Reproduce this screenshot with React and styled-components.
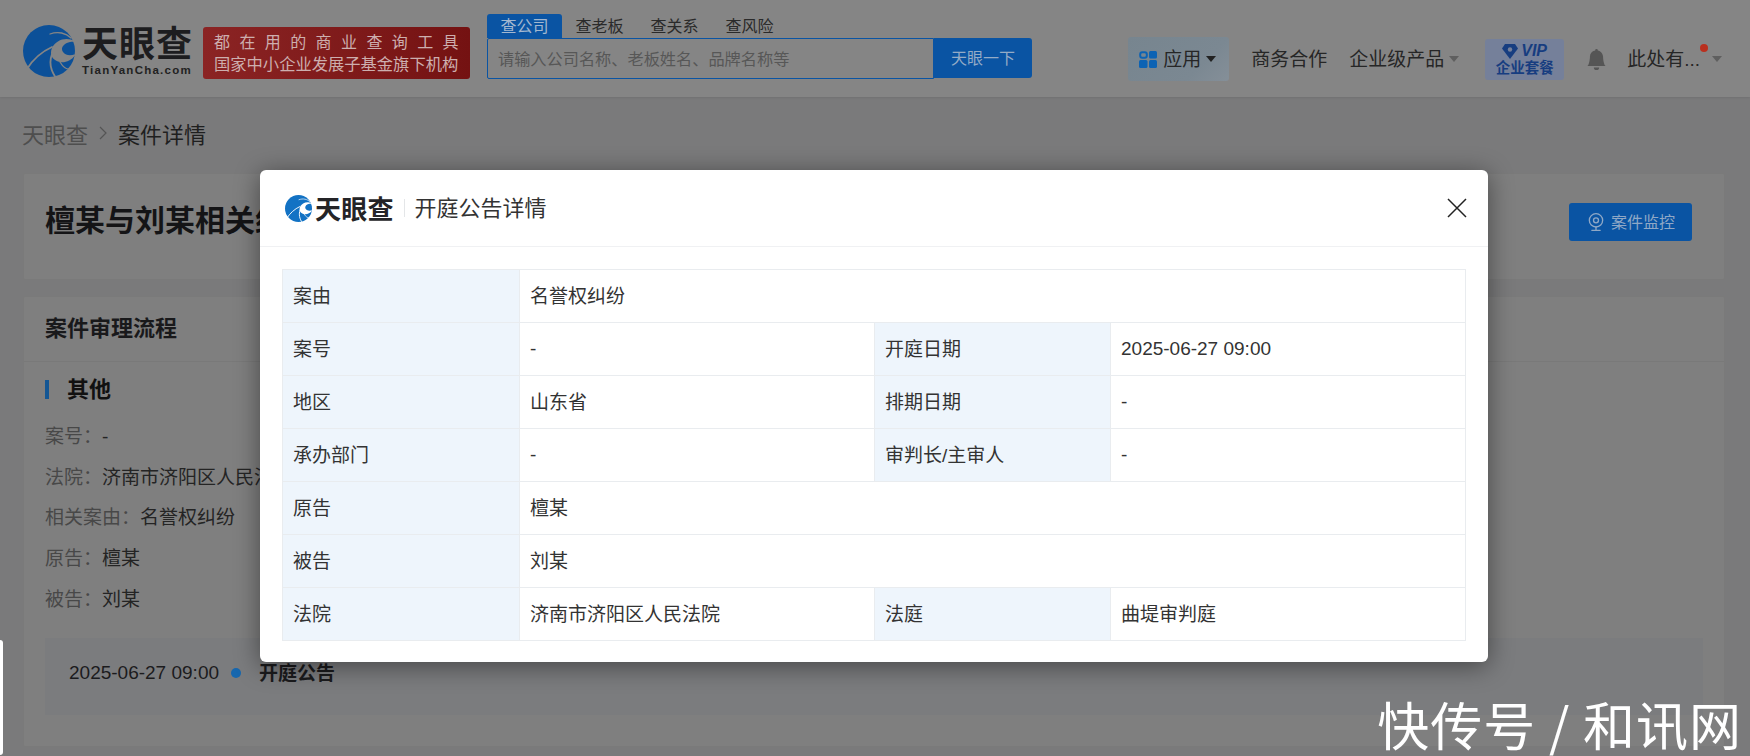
import styled, { createGlobalStyle } from 'styled-components';
import { BsBellFill } from 'react-icons/bs';
import { Webcam } from 'lucide-react';

const GlobalStyle = createGlobalStyle`
  html, body {
    margin: 0;
    padding: 0;
    height: 756px;
    overflow: hidden;
    background: #7a7a7b;
    font-family: "Liberation Sans", "Noto Sans CJK SC", sans-serif;
    color: #1c1c1e;
  }
  * { box-sizing: border-box; }
`;

const Page = styled.div`
  position: relative;
  width: 1750px;
  height: 756px;
  overflow: hidden;
`;

const Header = styled.header`
  display: flex;
  align-items: flex-start;
  height: 97px;
  padding: 0 28px 0 23px;
  background: #858585;
  box-shadow: 0 1px 2px rgba(0, 0, 0, 0.08);
`;

const Brand = styled.div`
  display: flex;
  align-items: center;
  gap: 7px;
  margin-top: 25px;
`;

const BrandText = styled.div`
  display: flex;
  flex-direction: column;
  width: 110px;
`;

const BrandName = styled.span`
  font-size: 36px;
  line-height: 38px;
  font-weight: 700;
  color: #1d1d1f;
  letter-spacing: 1px;
  white-space: nowrap;
`;

const BrandDomain = styled.span`
  font-size: 11.5px;
  line-height: 12px;
  font-weight: 700;
  color: #222;
  letter-spacing: 1.25px;
  white-space: nowrap;
`;

const Banner = styled.div`
  display: flex;
  flex-direction: column;
  justify-content: center;
  gap: 5px;
  width: 267px;
  height: 52px;
  margin: 27px 0 0 11px;
  padding-left: 11px;
  border-radius: 3px;
  background: linear-gradient(90deg, #8b2424, #741212);
  color: #cdaeae;
  font-size: 16.3px;
  line-height: 17px;
  white-space: nowrap;
`;

const BannerTop = styled.span`
  font-size: 16px;
  letter-spacing: 9.4px;
`;

const Search = styled.div`
  width: 545px;
  margin: 14px 0 0 17px;
`;

const Tabs = styled.div`
  display: flex;
  height: 24px;
`;

const Tab = styled.div`
  width: 75px;
  text-align: center;
  font-size: 16px;
  line-height: 25px;
  border-radius: 3px 3px 0 0;
  background: ${props => (props.$active ? '#0a54a3' : 'transparent')};
  color: ${props => (props.$active ? '#a3b8d0' : '#2a2a2a')};
`;

const SearchRow = styled.div`
  display: flex;
  height: 41px;
`;

const SearchInput = styled.div`
  width: 447px;
  padding-left: 10px;
  border: 1px solid #0a54a3;
  border-radius: 2px 0 0 2px;
  font-size: 16.2px;
  line-height: 41px;
  color: #575757;
`;

const SearchButton = styled.div`
  width: 98px;
  height: 40px;
  border-radius: 0 3px 3px 0;
  background: #0a54a3;
  color: #94abc6;
  font-size: 16px;
  line-height: 41px;
  text-align: center;
`;

const Nav = styled.nav`
  display: flex;
  align-items: center;
  height: 44px;
  margin: 37px 0 0 auto;
  font-size: 19px;
  color: #262626;
  white-space: nowrap;
`;

const AppsButton = styled.div`
  display: flex;
  align-items: center;
  width: 101px;
  height: 44px;
  padding-left: 11px;
  border-radius: 3px;
  background: linear-gradient(135deg, #77858f, #7b8892 70%, #858f98);
`;

const AppsLabel = styled.span`
  padding-bottom: 4px;
`;

const NavItem = styled.span`
  margin-left: ${props => props.$gap || 22}px;
  padding-bottom: 4px;
`;

const Caret = styled.i`
  display: inline-block;
  margin-left: ${props => props.$gap || 5}px;
  border-style: solid;
  border-width: 6px 5px 0;
  border-color: ${props => props.$color || '#5f5f5f'} transparent transparent;
`;

const VipBadge = styled.div`
  display: flex;
  flex-direction: column;
  align-items: center;
  width: 79px;
  height: 41px;
  margin-left: 26px;
  padding-top: 4px;
  border-radius: 3px;
  background: #75809a;
  color: #173d80;
  font-weight: 700;
`;

const VipLine = styled.div`
  display: flex;
  align-items: center;
  gap: 3px;
  height: 17px;
  font-size: 16px;
  font-style: italic;
`;

const VipText = styled.span`
  font-size: 14.5px;
  line-height: 17px;
`;

const Bell = styled.span`
  display: flex;
  margin-left: 22px;
  color: #555;
  font-size: 21px;
`;

const UserName = styled.span`
  position: relative;
  margin-left: 20px;
  padding-bottom: 4px;
`;

const RedDot = styled.i`
  position: absolute;
  top: 0;
  right: -8px;
  width: 8px;
  height: 8px;
  border-radius: 50%;
  background: #b9301f;
`;

const Main = styled.main`
  width: 1702px;
  margin-left: 23px;
`;

const Breadcrumb = styled.div`
  display: flex;
  align-items: center;
  height: 76px;
  padding-bottom: 5px;
  font-size: 22px;
  color: #1f1f1f;
`;

const CrumbLink = styled.span`
  color: #4e4e4e;
  margin-left: -1px;
`;

const CrumbSep = styled.svg`
  width: 10px;
  height: 16px;
  margin: 0 10px;
  fill: none;
  stroke: #555;
  stroke-width: 1.2;
`;

const Card = styled.section`
  background: #7f7f7f;
  border: 1px solid #7a7a7a;
  border-radius: 2px;
`;

const TitleCard = styled(Card)`
  display: flex;
  align-items: center;
  justify-content: space-between;
  height: 107px;
  padding: 0 32px 9px 21px;
`;

const CaseTitle = styled.h1`
  margin: 0 0 9px;
  font-size: 30px;
  font-weight: 700;
  color: #141416;
`;

const MonitorButton = styled.div`
  display: flex;
  align-items: center;
  gap: 5px;
  width: 123px;
  height: 38px;
  padding-left: 17px;
  border-radius: 3px;
  background: #0a54a3;
  color: #8fa8c6;
  font-size: 16px;
`;

const MonitorLabel = styled.span`
  padding-bottom: 2px;
`;

const ProcessCard = styled(Card)`
  height: 451px;
  margin-top: 16px;
`;

const CardHead = styled.div`
  height: 65px;
  padding-left: 21px;
  border-bottom: 1px solid #797979;
  font-size: 22px;
  font-weight: 700;
  line-height: 64px;
  color: #19191b;
`;

const CardBody = styled.div`
  padding: 11px 21px 0;
`;

const SectionName = styled.h2`
  display: flex;
  align-items: center;
  gap: 18px;
  height: 28px;
  margin: 0 0 16px;
  font-size: 22px;
  font-weight: 700;
  color: #111;
`;

const SectionMark = styled.i`
  width: 4px;
  height: 19px;
  margin-top: 4px;
  background: #135694;
`;

const InfoRow = styled.div`
  height: 40.7px;
  font-size: 19px;
  line-height: 40.7px;
  color: #242424;
`;

const InfoLabel = styled.span`
  color: #484848;
`;

const Timeline = styled.div`
  display: flex;
  align-items: center;
  height: 77px;
  margin-top: 18px;
  padding: 0 0 7px 24px;
  background: #7b7c7e;
  font-size: 19px;
  color: #1b1b1d;
`;

const TimelineDot = styled.i`
  width: 10px;
  height: 10px;
  margin: 0 19px 0 12px;
  border-radius: 50%;
  background: #1767ae;
`;

const TimelineName = styled.strong`
  padding-bottom: 4px;
  margin-left: -1px;
  font-weight: 700;
`;

const Modal = styled.div`
  position: absolute;
  top: 170px;
  left: 260px;
  width: 1228px;
  height: 492px;
  border-radius: 6px;
  background: #fff;
  box-shadow: 0 4px 26px rgba(0, 0, 0, 0.45);
`;

const ModalHead = styled.div`
  display: flex;
  align-items: center;
  height: 77px;
  padding: 0 21px 0 25px;
  border-bottom: 1px solid #f0f1f3;
`;

const ModalBrand = styled.span`
  margin-left: 3px;
  padding-bottom: 2px;
  font-size: 26px;
  font-weight: 700;
  letter-spacing: 0.2px;
  color: #242427;
`;

const ModalDivider = styled.i`
  width: 1px;
  height: 18px;
  margin: 0 10px;
  background: #e4e6e8;
`;

const ModalTitle = styled.span`
  padding-bottom: 4px;
  font-size: 22px;
  color: #333;
`;

const CloseIcon = styled.svg`
  width: 20px;
  height: 20px;
  margin-left: auto;
  fill: none;
  stroke: #222;
  stroke-width: 1.5;
`;

const ModalBody = styled.div`
  padding: 22px;
`;

const DetailTable = styled.table`
  width: 1183px;
  height: 371px;
  table-layout: fixed;
  border-collapse: collapse;
  font-size: 19px;
  color: #333;
`;

// CJK sits low in its line box, $latin cells (dates, dashes) stay centred
const Cell = styled.td`
  height: 53px;
  padding: 0 0 ${props => (props.$latin ? 0 : 4)}px 10px;
  border: 1px solid #e9ecef;
  background: ${props => (props.$label ? '#eef5fc' : '#fff')};
`;

const Watermark = styled.div`
  position: absolute;
  right: 8px;
  bottom: 1px;
  font-family: "Noto Sans CJK SC", sans-serif;
  font-size: 52px;
  line-height: 62px;
  letter-spacing: 1px;
  color: #fff;
  white-space: nowrap;
`;

const SideTab = styled.div`
  position: absolute;
  left: 0;
  top: 640px;
  width: 3px;
  height: 115px;
  border-radius: 0 4px 4px 0;
  background: #fff;
`;

// 天眼查 swirl mark, the gap colour follows what sits behind it
const LogoMark = ({ size, blue, gap }) => (
  <svg width={size} height={size} viewBox="0 0 52 52">
    <circle cx="26" cy="26" r="26" fill={blue} />
    <path d="M53 17C45 11 33 14 29 23 26 30 30 36 37 37 43 38 49 35 53 29 48 31 43 31 40 27 37 23 41 18 47 17 49 16.600 51 16.600 53 17Z" fill={gap} />
    <g fill="none" stroke={gap} strokeLinecap="round">
      <path d="M29 22C18 27 9 36 4 44" strokeWidth="1.8" />
      <path d="M29 29C26 37 28 46 33 53" strokeWidth="1.8" />
      <path d="M37 37C40 42 44 45 48 44" strokeWidth="1.3" />
      <path d="M27 9C35 6 43 8 48 13" strokeWidth="1.3" />
    </g>
  </svg>
);

const AppsIcon = () => (
  <svg width="18" height="17" viewBox="0 0 18 17" style={{ marginRight: 6 }}>
    <rect x="1.2" y="1.2" width="6.6" height="5.6" rx="2" fill="none" stroke="#0c63b4" strokeWidth="2" />
    <rect x="10" width="8" height="7.5" rx="1.5" fill="#0c63b4" />
    <rect y="9" width="8.5" height="8" rx="1.5" fill="#0c63b4" />
    <rect x="10" y="9" width="8" height="8" rx="1.5" fill="#0c63b4" />
  </svg>
);

const VipGem = () => (
  <svg width="16" height="15" viewBox="0 0 16 15">
    <path d="M3 0h10l3 4.500L8 15 0 4.500z" fill="#173d80" />
    <circle cx="8" cy="5.500" r="2.200" fill="#75809a" />
  </svg>
);

const App = () => {
  const tabs = ['查公司', '查老板', '查关系', '查风险'];
  const infos = [
    ['案号', '-'],
    ['法院', '济南市济阳区人民法院'],
    ['相关案由', '名誉权纠纷'],
    ['原告', '檀某'],
    ['被告', '刘某'],
  ];

  return (
    <Page>
      <GlobalStyle />
      <Header>
        <Brand>
          <LogoMark size={52} blue="#0c5098" gap="#858585" />
          <BrandText>
            <BrandName>天眼查</BrandName>
            <BrandDomain>TianYanCha.com</BrandDomain>
          </BrandText>
        </Brand>
        <Banner>
          <BannerTop>都在用的商业查询工具</BannerTop>
          <span>国家中小企业发展子基金旗下机构</span>
        </Banner>
        <Search>
          <Tabs>
            {tabs.map((tab, i) => (
              <Tab key={tab} $active={i === 0}>{tab}</Tab>
            ))}
          </Tabs>
          <SearchRow>
            <SearchInput>请输入公司名称、老板姓名、品牌名称等</SearchInput>
            <SearchButton>天眼一下</SearchButton>
          </SearchRow>
        </Search>
        <Nav>
          <AppsButton>
            <AppsIcon />
            <AppsLabel>应用</AppsLabel>
            <Caret $gap={5} $color="#222" />
          </AppsButton>
          <NavItem>商务合作</NavItem>
          <NavItem>企业级产品</NavItem>
          <Caret />
          <VipBadge>
            <VipLine><VipGem />VIP</VipLine>
            <VipText>企业套餐</VipText>
          </VipBadge>
          <Bell><BsBellFill /></Bell>
          <UserName>此处有...<RedDot /></UserName>
          <Caret $gap={12} />
        </Nav>
      </Header>

      <Main>
        <Breadcrumb>
          <CrumbLink>天眼查</CrumbLink>
          <CrumbSep viewBox="0 0 10 16"><path d="M2 2l6 6-6 6" /></CrumbSep>
          案件详情
        </Breadcrumb>
        <TitleCard>
          <CaseTitle>檀某与刘某相关纠纷</CaseTitle>
          <MonitorButton>
            <Webcam size={20} strokeWidth={1.6} />
            <MonitorLabel>案件监控</MonitorLabel>
          </MonitorButton>
        </TitleCard>
        <ProcessCard>
          <CardHead>案件审理流程</CardHead>
          <CardBody>
            <SectionName><SectionMark />其他</SectionName>
            {infos.map(([label, value]) => (
              <InfoRow key={label}>
                <InfoLabel>{label}：</InfoLabel>{value}
              </InfoRow>
            ))}
            <Timeline>
              2025-06-27 09:00
              <TimelineDot />
              <TimelineName>开庭公告</TimelineName>
            </Timeline>
          </CardBody>
        </ProcessCard>
      </Main>

      <Modal>
        <ModalHead>
          <LogoMark size={27} blue="#1272c4" gap="#fff" />
          <ModalBrand>天眼查</ModalBrand>
          <ModalDivider />
          <ModalTitle>开庭公告详情</ModalTitle>
          <CloseIcon viewBox="0 0 20 20"><path d="M1 1l18 18M19 1L1 19" /></CloseIcon>
        </ModalHead>
        <ModalBody>
          <DetailTable>
            <colgroup>
              <col style={{ width: 237 }} />
              <col style={{ width: 355 }} />
              <col style={{ width: 236 }} />
              <col style={{ width: 355 }} />
            </colgroup>
            <tbody>
              <tr><Cell $label>案由</Cell><Cell colSpan={3}>名誉权纠纷</Cell></tr>
              <tr><Cell $label>案号</Cell><Cell $latin>-</Cell><Cell $label>开庭日期</Cell><Cell $latin>2025-06-27 09:00</Cell></tr>
              <tr><Cell $label>地区</Cell><Cell>山东省</Cell><Cell $label>排期日期</Cell><Cell $latin>-</Cell></tr>
              <tr><Cell $label>承办部门</Cell><Cell $latin>-</Cell><Cell $label>审判长/主审人</Cell><Cell $latin>-</Cell></tr>
              <tr><Cell $label>原告</Cell><Cell colSpan={3}>檀某</Cell></tr>
              <tr><Cell $label>被告</Cell><Cell colSpan={3}>刘某</Cell></tr>
              <tr><Cell $label>法院</Cell><Cell>济南市济阳区人民法院</Cell><Cell $label>法庭</Cell><Cell>曲堤审判庭</Cell></tr>
            </tbody>
          </DetailTable>
        </ModalBody>
      </Modal>

      <SideTab />
      <Watermark>快传号 / 和讯网</Watermark>
    </Page>
  );
};

export default App;
